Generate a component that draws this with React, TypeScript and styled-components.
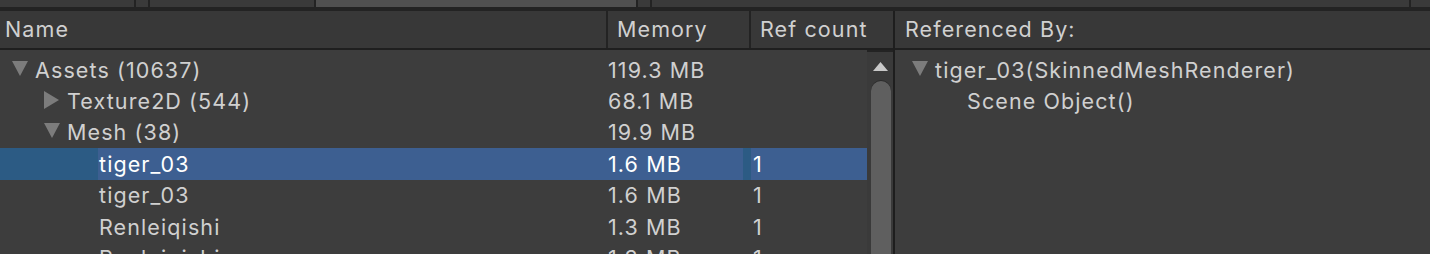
import styled, { createGlobalStyle, css } from "styled-components";

const GlobalStyle = createGlobalStyle`
  html, body {
    margin: 0;
    padding: 0;
    background: #3c3c3c;
  }
  body {
    font-family: Inter, "Noto Sans", "Liberation Sans", sans-serif;
  }
`;

type TreeRow = {
  name: string;
  level: number;
  fold?: "open" | "closed";
  memory: string;
  refs?: string;
  selected?: boolean;
};

const rows: TreeRow[] = [
  { name: "Assets (10637)", level: 0, fold: "open", memory: "119.3 MB" },
  { name: "Texture2D (544)", level: 1, fold: "closed", memory: "68.1 MB" },
  { name: "Mesh (38)", level: 1, fold: "open", memory: "19.9 MB" },
  { name: "tiger_03", level: 2, memory: "1.6 MB", refs: "1", selected: true },
  { name: "tiger_03", level: 2, memory: "1.6 MB", refs: "1" },
  { name: "Renleiqishi", level: 2, memory: "1.3 MB", refs: "1" },
  { name: "Renleiqishi", level: 2, memory: "1.3 MB", refs: "1" },
];

const tabs = [
  { width: 134 },
  { width: 12 },
  { width: 164 },
  { width: 320, active: true },
  { width: 12 },
  { width: 757 },
  { width: 21 },
];

const Fold = ({ kind, light }: { kind: "open" | "closed" | "up"; light?: boolean }) => {
  const fill = light ? "#c8c8c8" : "#7c7c7c";
  if (kind === "closed")
    return (
      <svg width="16" height="18" viewBox="0 0 16 18">
        <polygon points="0,0 15,9 0,18" fill={fill} />
      </svg>
    );
  if (kind === "up")
    return (
      <svg width="15" height="9" viewBox="0 0 15 9">
        <polygon points="0,9 7.5,0 15,9" fill={fill} />
      </svg>
    );
  return (
    <svg width="16" height="15" viewBox="0 0 16 15">
      <polygon points="0,0 16,0 8,15" fill={fill} />
    </svg>
  );
};

const App = () => {
  return (
    <Window>
      <GlobalStyle />
      <TabStrip>
        {tabs.map((t, i) => (
          <Tab key={i} $width={t.width} $active={t.active} />
        ))}
      </TabStrip>
      <Body>
        <LeftPanel>
          <Header>
            <HeaderCell $width={608}>Name</HeaderCell>
            <HeaderCell $width={143}>Memory</HeaderCell>
            <HeaderCell $width={142} $last>
              Ref count
            </HeaderCell>
          </Header>
          <ListArea>
            <Rows>
              {rows.map((r, i) => (
                <Row key={i} $selected={r.selected}>
                  <NameCell $level={r.level}>
                    <FoldSlot>{r.fold && <Fold kind={r.fold} />}</FoldSlot>
                    {r.name}
                  </NameCell>
                  <MemoryCell>{r.memory}</MemoryCell>
                  <RefCell>{r.refs}</RefCell>
                </Row>
              ))}
            </Rows>
            <Scrollbar>
              <ArrowButton>
                <Fold kind="up" light />
              </ArrowButton>
              <Thumb />
            </Scrollbar>
          </ListArea>
        </LeftPanel>
        <RightPanel>
          <Header>
            <HeaderCell $width={535} $last $pad={10}>
              Referenced By:
            </HeaderCell>
          </Header>
          <RefList>
            <RefRow $level={0}>
              <FoldSlot>
                <Fold kind="open" />
              </FoldSlot>
              tiger_03(SkinnedMeshRenderer)
            </RefRow>
            <RefRow $level={1}>Scene Object()</RefRow>
          </RefList>
        </RightPanel>
      </Body>
    </Window>
  );
};

export default App;

const Window = styled.div`
  width: 1430px;
  height: 254px;
  overflow: hidden;
  display: flex;
  flex-direction: column;
  background: #3c3c3c;
  color: #d0d0d0;
  font-size: 21.5px;
  letter-spacing: 1.1px;
`;

const TabStrip = styled.div`
  display: flex;
  gap: 2px;
  height: 7px;
  padding-bottom: 4px;
  background: #232323;
  flex-shrink: 0;
`;

const Tab = styled.div<{ $width: number; $active?: boolean }>`
  width: ${(p) => p.$width}px;
  flex-shrink: 0;
  background: ${(p) => (p.$active ? "#505050" : "#3a3a3a")};
`;

const Body = styled.div`
  flex: 1;
  display: flex;
  min-height: 0;
`;

const LeftPanel = styled.div`
  width: 893px;
  flex-shrink: 0;
  display: flex;
  flex-direction: column;
  border-right: 2px solid #1e1e1e;
`;

const RightPanel = styled.div`
  flex: 1;
  display: flex;
  flex-direction: column;
`;

const Header = styled.div`
  display: flex;
  height: 37px;
  flex-shrink: 0;
  background: #383838;
  border-bottom: 2px solid #1f1f1f;
`;

const HeaderCell = styled.div<{ $width: number; $last?: boolean; $pad?: number }>`
  width: ${(p) => p.$width}px;
  box-sizing: border-box;
  padding-left: ${(p) => p.$pad ?? 9}px;
  display: flex;
  align-items: center;
  line-height: 1;
  white-space: nowrap;
  ${(p) =>
    !p.$last &&
    css`
      border-right: 2px solid #232323;
    `}
  &:first-child {
    padding-left: ${(p) => p.$pad ?? 5}px;
  }
`;

const ListArea = styled.div`
  flex: 1;
  display: flex;
  min-height: 0;
  background: #3d3d3d;
`;

const Rows = styled.div`
  flex: 1;
  padding-top: 4px;
`;

const Row = styled.div<{ $selected?: boolean }>`
  display: grid;
  grid-template-columns: 608px 145px 1fr;
  height: 31.4px;
  align-items: center;
  white-space: nowrap;
  ${(p) =>
    p.$selected &&
    css`
      color: #ffffff;
      background: linear-gradient(
        to right,
        #2c5b84 0 98px,
        #3d5f91 98px 743px,
        #2c5b84 743px 751px,
        #3d5f91 751px
      );
    `}
`;

const NameCell = styled.div<{ $level: number }>`
  display: flex;
  align-items: center;
  padding-left: ${(p) => 12 + p.$level * 32}px;
`;

const FoldSlot = styled.span`
  width: 23px;
  display: inline-flex;
  align-items: center;
  flex-shrink: 0;
  margin-top: -3px;
`;

const MemoryCell = styled.div``;

const RefCell = styled.div``;

const Scrollbar = styled.div`
  width: 26px;
  flex-shrink: 0;
  background: #3a3a3a;
  border-top: 2px solid #232323;
  display: flex;
  flex-direction: column;
  align-items: center;
`;

const ArrowButton = styled.div`
  height: 29px;
  display: flex;
  align-items: center;
  justify-content: center;
  padding-left: 1px;
`;

const Thumb = styled.div`
  flex: 1;
  width: 20px;
  margin-left: 2px;
  background: #5f5f5f;
  border-radius: 10px 10px 0 0;
  box-shadow: 0 -1px 0 #2c2c2c;
`;

const RefList = styled.div`
  flex: 1;
  padding-top: 4px;
  background: #3d3d3d;
`;

const RefRow = styled.div<{ $level: number }>`
  display: flex;
  align-items: center;
  height: 31.4px;
  white-space: nowrap;
  padding-left: ${(p) => (p.$level === 0 ? 17 : 72)}px;
`;
